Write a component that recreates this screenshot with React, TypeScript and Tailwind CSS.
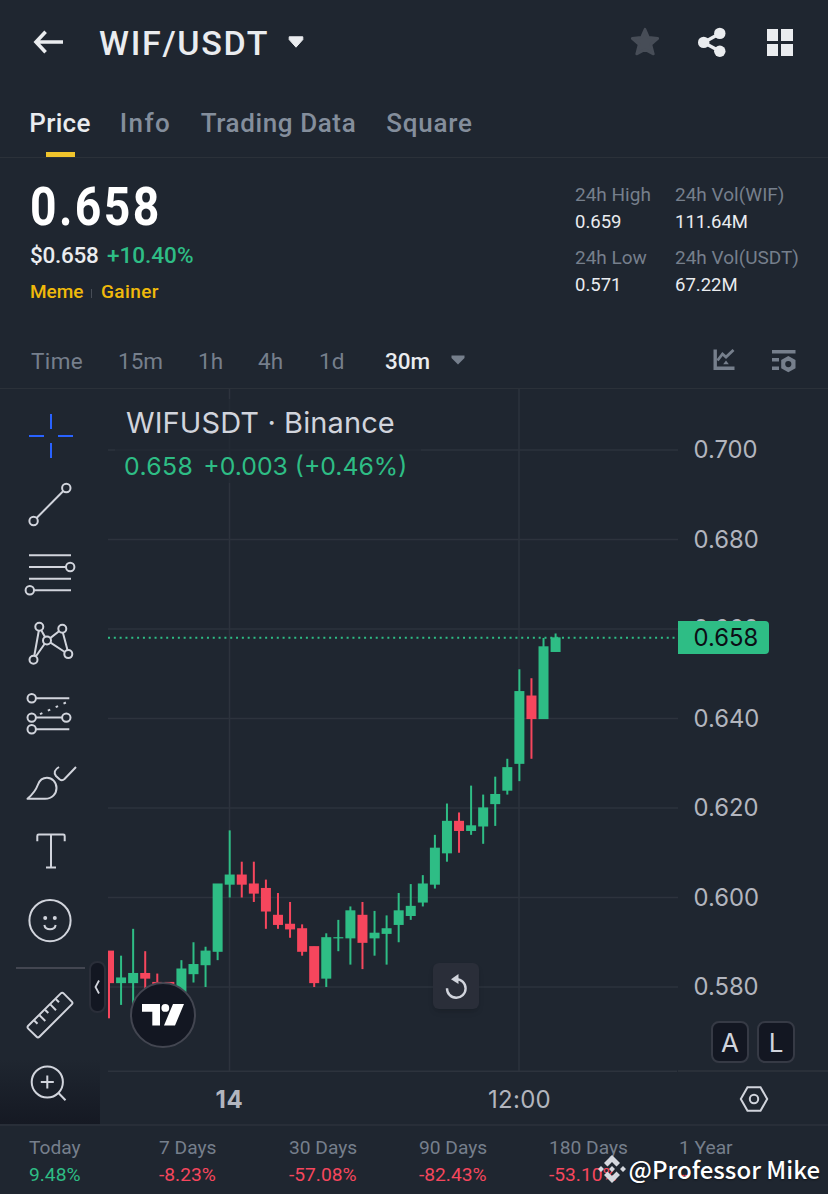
import { ReactNode } from "react";

type Candle = [open: number, high: number, low: number, close: number];

// prices in thousandths of a USDT, one candle per 30 minutes
const candles: Candle[] = [
  [588, 588, 573, 581],
  [581, 587, 576, 582],
  [581, 593, 576, 583],
  [583, 588, 577, 582],
  [581, 583, 577, 580],
  [581, 581, 577, 580],
  [579, 586, 578, 584],
  [583, 590, 581, 585],
  [585, 589, 580, 588],
  [588, 603, 586, 603],
  [603, 615, 600, 605],
  [605, 608, 600, 603],
  [603, 608, 599, 601],
  [602, 604, 593, 597],
  [596, 601, 593, 594],
  [594, 599, 591, 593],
  [593, 594, 587, 588],
  [589, 589, 580, 581],
  [582, 592, 580, 591],
  [591, 595, 588, 591],
  [591, 598, 585, 597],
  [596, 599, 584, 590],
  [591, 597, 587, 592],
  [592, 596, 585, 593],
  [594, 601, 590, 597],
  [596, 603, 595, 598],
  [599, 605, 598, 603],
  [603, 614, 602, 611],
  [610, 621, 608, 617],
  [617, 619, 610, 615],
  [615, 625, 614, 616],
  [616, 623, 612, 620],
  [621, 627, 616, 623],
  [624, 631, 623, 629],
  [630, 651, 626, 646],
  [645, 649, 631, 640],
  [640, 658, 640, 656],
  [655, 659, 655, 658],
];

const priceToY = (price: number) => 598 - (price - 580) * 4.475;

const tabs = [
  { label: "Price", active: true, className: "w-[60px] tracking-[0.3px]" },
  { label: "Info", active: false, className: "w-[51px] tracking-[1.4px]" },
  { label: "Trading Data", active: false, className: "w-[155px] tracking-[0.6px]" },
  { label: "Square", active: false, className: "w-[87px] tracking-[0.8px]" },
];

const stats = [
  { label: "24h High", value: "0.659" },
  { label: "24h Vol(WIF)", value: "111.64M" },
  { label: "24h Low", value: "0.571" },
  { label: "24h Vol(USDT)", value: "67.22M" },
];

const intervals = [
  { label: "Time", className: "w-[87px] tracking-[0.4px]" },
  { label: "15m", className: "w-[80px]" },
  { label: "1h", className: "w-[60px]" },
  { label: "4h", className: "w-[61px]" },
  { label: "1d", className: "w-[66px]" },
];

const axisPrices = ["0.700", "0.680", "0.660", "0.640", "0.620", "0.600", "0.580"];

const periods = [
  { label: "Today", value: "9.48%", up: true },
  { label: "7 Days", value: "-8.23%", up: false },
  { label: "30 Days", value: "-57.08%", up: false },
  { label: "90 Days", value: "-82.43%", up: false },
  { label: "180 Days", value: "-53.10%", up: false },
  { label: "1 Year", value: "--", up: false },
];

const ToolIcon = ({ children }: { children: ReactNode }) => (
  <svg
    width="60"
    height="60"
    viewBox="0 0 60 60"
    fill="none"
    stroke="#d1d4dc"
    strokeWidth="2"
    className="shrink-0"
  >
    {children}
  </svg>
);

const tools: ReactNode[] = [
  <path d="M31 8V23M31 37V52M9 30H24M38 30H53" stroke="#2962ff" />,
  <>
    <circle cx="46.3" cy="13" r="4.2" />
    <circle cx="13.6" cy="46" r="4.2" />
    <path d="M16.6 43L43.3 16" />
  </>,
  <>
    <path d="M9 11.3H51M9 23H46M9 34.7H51M14 46.3H51" />
    <circle cx="50.2" cy="23" r="4.2" />
    <circle cx="9.8" cy="46.3" r="4.2" />
  </>,
  <>
    <circle cx="19.3" cy="13.8" r="4" />
    <circle cx="42.3" cy="15.8" r="4" />
    <circle cx="27" cy="27.5" r="4" />
    <circle cx="13.5" cy="46.8" r="4" />
    <circle cx="48.3" cy="41.1" r="4" />
    <path d="M18.8 17.8L14.3 42.8M21.3 17.3L25 24M30.2 25.1L39 18.2M42.9 19.8L47.5 37.1M30.5 29.6L44.8 39M24.7 30.8L15.8 43.5" />
  </>,
  <>
    <circle cx="11.7" cy="15.3" r="4.2" />
    <circle cx="11.7" cy="34.6" r="4.2" />
    <circle cx="46.3" cy="34.6" r="4.2" />
    <circle cx="11.7" cy="46.3" r="4.2" />
    <path d="M16 15.3H49.3M16 34.6H42M16 46.3H49.3" />
    <path d="M20 31.2L47 19" strokeDasharray="2.6 6" />
  </>,
  <>
    <path
      d="M7.5 46.8H25C32 46.8 36.5 42 36.5 36C36.5 30 32 25.8 27 25.8C22.5 25.8 19.5 28.5 18 32.5C16 38 12.5 42.5 7.5 46.8Z"
      strokeLinejoin="round"
    />
    <path d="M39 15C34.5 17.5 33.5 21 36 24L39.5 27.2C41 28.4 43 28.4 44.5 27L56 15" />
  </>,
  <path d="M17.3 20.3V15Q17.3 13.6 18.7 13.6H43.3Q44.7 13.6 44.7 15V20.3M31 13.6V46.5M26 46.5H36" />,
  <>
    <circle cx="30" cy="30.6" r="20.6" />
    <circle cx="25.2" cy="28" r="2" fill="#d1d4dc" stroke="none" />
    <circle cx="34.8" cy="28" r="2" fill="#d1d4dc" stroke="none" />
    <path d="M24.3 35C25.5 40.8 34.5 40.8 35.7 35" />
  </>,
];

const Header = () => (
  <header className="flex h-[84px] items-center pl-[33px] pr-[35px] text-[#eaecef]">
    <svg width="30" height="24" viewBox="0 0 30 24" fill="none" stroke="currentColor" strokeWidth="3.6">
      <path d="M30 12H3M12.6 1.8L3 12L12.6 22.2" />
    </svg>
    <h1 className="ml-[36px] w-[170px] whitespace-nowrap pt-[2px] text-[34px] font-medium leading-none tracking-[1.7px]">
      WIF/USDT
    </h1>
    <svg width="16" height="12" viewBox="0 0 16 12" fill="currentColor" className="ml-[19px]">
      <path d="M1.2 .8H14.8V3.6L8 11.2L1.2 3.6Z" stroke="currentColor" />
    </svg>
    <svg width="30" height="30" viewBox="0 0 30 30" className="ml-auto">
      <path
        d="M15 2.2L18.6 10.4L27.8 11.4L20.9 17.4L23.4 27L15 22.5L6.6 27L9.1 17.4L2.2 11.4L11.4 10.4Z"
        fill="#474d57"
        stroke="#474d57"
        strokeWidth="2.6"
        strokeLinejoin="round"
      />
    </svg>
    <svg width="30" height="30" viewBox="0 0 30 30" fill="currentColor" className="ml-[37px]">
      <circle cx="6.7" cy="15.4" r="5.7" />
      <circle cx="22.8" cy="6.4" r="5.7" />
      <circle cx="22.8" cy="24.2" r="5.7" />
      <path d="M22.8 6.4L6.7 15.4L22.8 24.2" fill="none" stroke="currentColor" strokeWidth="3.4" />
    </svg>
    <div className="ml-[40px] grid grid-cols-2 gap-[3px]">
      <i className="h-[12px] w-[11.6px] bg-current" />
      <i className="h-[12px] w-[11.6px] bg-current" />
      <i className="h-[12px] w-[11.6px] bg-current" />
      <i className="h-[12px] w-[11.6px] bg-current" />
    </div>
  </header>
);

const Tabs = () => (
  <nav className="flex h-[74px] gap-[30px] border-b border-[#2b3139] pl-[30px]">
    {tabs.map((tab) => (
      <div key={tab.label} className={`flex flex-col items-center ${tab.className}`}>
        <span
          className={`mt-[21px] whitespace-nowrap text-[26px] font-medium leading-[36px] ${
            tab.active ? "text-[#eaecef]" : "text-[#848e9c]"
          }`}
        >
          {tab.label}
        </span>
        {tab.active && <i className="mt-[11px] h-[5px] w-[29px] bg-[#f0c42c]" />}
      </div>
    ))}
  </nav>
);

const Summary = () => (
  <section className="flex h-[177px] justify-between pl-[30px]">
    <div>
      <div className="mt-[17px] h-[62px] w-[130px] origin-left scale-x-[0.85] whitespace-nowrap text-[54.5px] font-bold leading-[62px] tracking-[2.8px] text-white">
        0.658
      </div>
      <div className="mt-[5px] flex h-[28px] items-center gap-[8px] text-[22.5px] font-medium">
        <span className="w-[69px] tracking-[-0.3px] text-[#eaecef]">$0.658</span>
        <span className="text-[#2ebd85]">+10.40%</span>
      </div>
      <div className="mt-[10px] flex h-[24px] items-center text-[19px] font-medium text-[#f0b90b]">
        <span className="w-[53px]">Meme</span>
        <i className="ml-[8px] mr-[9px] mt-[3px] h-[9px] w-px bg-[#474d57]" />
        <span className="tracking-[0.4px]">Gainer</span>
      </div>
    </div>
    <div className="mt-[23px] grid w-[253px] grid-cols-[100px_153px] content-start gap-y-[7.5px]">
      {stats.map((stat) => (
        <div key={stat.label} className="h-[55.5px] whitespace-nowrap">
          <div className="text-[19px] leading-[28px] text-[#767f8c]">{stat.label}</div>
          <div className="text-[18.5px] leading-[26px] text-[#eaecef]">{stat.value}</div>
        </div>
      ))}
    </div>
  </section>
);

const IntervalBar = () => (
  <div className="flex h-[54px] items-center border-b border-[#2b3139] pl-[31px] pr-[32px] text-[22.5px] text-[#767f8c]">
    {intervals.map((interval) => (
      <span key={interval.label} className={interval.className}>
        {interval.label}
      </span>
    ))}
    <span className="font-medium text-[#eaecef]">30m</span>
    <svg width="14" height="10" viewBox="0 0 14 10" fill="#767f8c" className="ml-auto mr-[248px] -mt-[3px]">
      <path d="M.5 .5H13.5V3L7 9.5L.5 3Z" />
    </svg>
    <svg width="22" height="22" viewBox="0 0 22 22" fill="none" stroke="#767f8c" strokeWidth="3.4" className="-mt-[3px]">
      <path d="M2.2 .5V19.3H21.5" />
      <path d="M4.5 11.5L9.5 5L13 8L20.5 1" strokeWidth="2.8" />
      <path d="M10.2 15.2H15.8L13 11.5Z" fill="#767f8c" stroke="none" />
    </svg>
    <svg width="25" height="24" viewBox="0 0 25 24" fill="#767f8c" className="ml-[36px] -mt-px">
      <path d="M1 1H24.5V4.6H1ZM1 9H8V12.6H1ZM1 17.5H8V21.1H1Z" />
      <path
        fillRule="evenodd"
        d="M17.3 7L24.5 11V19.2L17.3 23.3L10.2 19.2V11ZM17.3 12A3.1 3.1 0 1 0 17.3 18.2A3.1 3.1 0 1 0 17.3 12Z"
      />
    </svg>
  </div>
);

const Toolbar = () => (
  <aside className="relative flex w-[108px] shrink-0 flex-col pt-[12.3px]">
    <div className="absolute bottom-0 left-0 h-[64px] w-[100px] bg-gradient-to-b from-[#1f2630] to-[#151923]" />
    {tools.map((tool, index) => (
      <div key={index} className="flex h-[69.2px] w-[100px] items-center justify-center">
        <ToolIcon>{tool}</ToolIcon>
      </div>
    ))}
    <i className="ml-[15.5px] mt-[12px] h-[2px] w-[69px] bg-[#434651]" />
    <div className="relative mt-[16.5px] flex h-[138px] w-[100px] flex-col items-center gap-[9px]">
      <ToolIcon>
        <path d="M8.2 40.8L40.8 8.4Q42.2 7 43.6 8.4L51.8 16.6Q53.2 18 51.8 19.4L19.4 51.8Q18 53.2 16.6 51.8L8.2 43.6Q6.8 42.2 8.2 40.8Z" />
        <path d="M14.2 35.5L17.5 38.8M19.5 30.2L25.3 36M25 24.7L28.3 28M30.3 19.4L36 25.2M35.7 14L39 17.3" />
      </ToolIcon>
      <ToolIcon>
        <circle cx="27.3" cy="28" r="15.6" />
        <path d="M27.3 21.5V34.5M20.8 28H33.8M38.5 39L45.5 46.3" />
      </ToolIcon>
    </div>
    <div className="absolute left-[89px] top-[572px] flex h-[52px] w-[17px] items-center justify-center rounded-lg border-2 border-[#2a2e39] bg-[#131722]">
      <svg width="6" height="16" viewBox="0 0 6 16" fill="none" stroke="#d1d4dc" strokeWidth="1.8" className="-ml-[2px]">
        <path d="M5 1.5L1.5 8L5 14.5" />
      </svg>
    </div>
  </aside>
);

const CandleChart = () => (
  <svg width="570" height="683" viewBox="108 0 570 683" className="block">
    <g stroke="#2d333d" strokeWidth="1.5">
      {axisPrices.map((price) => {
        const y = priceToY(Number(price) * 1000);
        return <line key={price} x1="108" x2="678" y1={y} y2={y} />;
      })}
      <line x1="229.5" x2="229.5" y1="0" y2="683" />
      <line x1="519" x2="519" y1="0" y2="683" />
      <line x1="108" x2="677" y1="682.3" y2="682.3" />
    </g>
    {candles.map(([open, high, low, close], index) => {
      const x = 109 + index * 12.07;
      const top = priceToY(Math.max(open, close)) - 0.6;
      const bottom = priceToY(Math.min(open, close)) + 0.6;
      return (
        <g key={index} fill={close >= open ? "#2ebd85" : "#f6465d"}>
          <rect x={x - 1} y={priceToY(high)} width="2" height={priceToY(low) - priceToY(high)} />
          <rect x={x - 5} y={top} width="10" height={bottom - top} />
        </g>
      );
    })}
    <line x1="108" x2="678" y1="248.7" y2="248.7" stroke="#2ebd85" strokeWidth="2" strokeDasharray="2 3.82" />
  </svg>
);

const Chart = () => (
  <div className="relative w-[570px] shrink-0 font-[Inter]">
    <CandleChart />
    <div className="flex h-[52px] items-center pt-[3px] text-[24px] text-[#b2b5be]">
      <span className="w-[243px] shrink-0 text-center font-bold tracking-[0.8px]">14</span>
      <span className="w-[337px] shrink-0 text-center tracking-[0.3px]">12:00</span>
    </div>
    <div className="absolute left-[7px] top-[10px] h-[84px] w-[306px] bg-[#1f2630]/70 pl-[11px] pt-[4px]">
      <div className="whitespace-nowrap text-[29px] leading-[39px] tracking-[0.1px] text-[#d1d4dc]">
        WIFUSDT · Binance
      </div>
      <div className="-ml-[2px] mt-[5px] flex gap-[10px] whitespace-nowrap text-[24.8px] leading-[38px] text-[#2ebd85]">
        <span className="tracking-[0.4px]">0.658</span>
        <span>+0.003 (+0.46%)</span>
      </div>
    </div>
    <div className="absolute left-[22px] top-[593px] flex h-[66px] w-[66px] items-center justify-center rounded-full border-2 border-[#434651] bg-[#131722]">
      <svg width="42" height="22" viewBox="0 0 42 22" fill="white">
        <path d="M0 0H18V21.5H10.3V7.7H0ZM31 0H42L33 21.5H22Z" />
        <circle cx="23.3" cy="3.9" r="3.9" />
      </svg>
    </div>
    <button className="absolute left-[325px] top-[574px] flex h-[46px] w-[46px] items-center justify-center rounded-md bg-[#2a2e39] shadow-md">
      <svg width="30" height="30" viewBox="0 0 30 30" fill="none" stroke="#d1d4dc" strokeWidth="2.4">
        <path d="M6 17.2A9.3 9.3 0 1 0 15.3 8.2" />
        <path d="M10 8.2L17.500 3V13Z" fill="#d1d4dc" stroke="none" />
      </svg>
    </button>
  </div>
);

const PriceAxis = () => (
  <div className="relative flex-1 font-[Inter] text-[23.8px] text-[#b2b5be]">
    <div className="flex h-[683px] flex-col border-b-2 border-[#2a3039] pl-[15.5px] pt-[16.5px]">
      {axisPrices.map((price) => (
        <div key={price} className="flex h-[89.5px] shrink-0 items-center">
          {price}
        </div>
      ))}
    </div>
    <div className="absolute left-0 top-[232px] flex h-[33px] w-[90.5px] items-center rounded-r bg-[#2ebd85] pl-[15.5px] pt-px text-[#0c0e15]">
      0.658
    </div>
    <div className="absolute left-[33px] top-[632px] flex gap-[8px] text-[26px] text-[#d1d4dc]">
      <span className="flex h-[42px] w-[38px] items-center justify-center rounded-lg border-2 border-[#363a45] bg-[#131722]">
        A
      </span>
      <span className="flex h-[42px] w-[38px] items-center justify-center rounded-lg border-2 border-[#363a45] bg-[#131722]">
        L
      </span>
    </div>
    <svg
      width="30"
      height="28"
      viewBox="0 0 30 28"
      fill="none"
      stroke="#d1d4dc"
      strokeWidth="2"
      className="ml-[61px] mt-[13px]"
    >
      <path d="M1.8 14L8.5 2.2H21.5L28.2 14L21.5 25.8H8.5Z" />
      <circle cx="15" cy="14" r="4.2" />
    </svg>
  </div>
);

const Watermark = () => (
  <div className="absolute bottom-[8px] right-[8px] flex items-center text-white">
    <svg width="28" height="28" viewBox="0 0 28 28" fill="#d5d8de" className="mr-[3px]">
      <path d="M14 0L22 8L18.5 11.5L14 7L9.5 11.5L6 8Z" />
      <path d="M14 28L22 20L18.5 16.5L14 21L9.5 16.5L6 20Z" />
      <path d="M14 11L17 14L14 17L11 14ZM3 11L6 14L3 17L0 14ZM25 11L28 14L25 17L22 14Z" />
    </svg>
    <span className="whitespace-nowrap font-['Noto_Sans_CJK_SC',sans-serif] text-[24px] font-medium leading-[34px] [text-shadow:0_1px_2px_rgba(0,0,0,0.5)]">
      @Professor Mike
    </span>
  </div>
);

const Performance = () => (
  <footer className="relative h-[70px] border-t-2 border-[#282e38]">
    <div className="flex pl-[29px] pt-[8px]">
      {periods.map((period) => (
        <div key={period.label} className="w-[130px] whitespace-nowrap">
          <div className="text-[19.2px] leading-[27px] text-[#767f8c]">{period.label}</div>
          <div className={`text-[19.2px] leading-[27px] ${period.up ? "text-[#2ebd85]" : "text-[#f6465d]"}`}>
            {period.value}
          </div>
        </div>
      ))}
    </div>
    <Watermark />
  </footer>
);

const App = () => (
  <div className="h-[1194px] w-[828px] overflow-hidden bg-[#1f2630] font-[Roboto,sans-serif]">
    <Header />
    <Tabs />
    <Summary />
    <IntervalBar />
    <main className="flex h-[735px]">
      <Toolbar />
      <Chart />
      <PriceAxis />
    </main>
    <Performance />
  </div>
);

export default App;
